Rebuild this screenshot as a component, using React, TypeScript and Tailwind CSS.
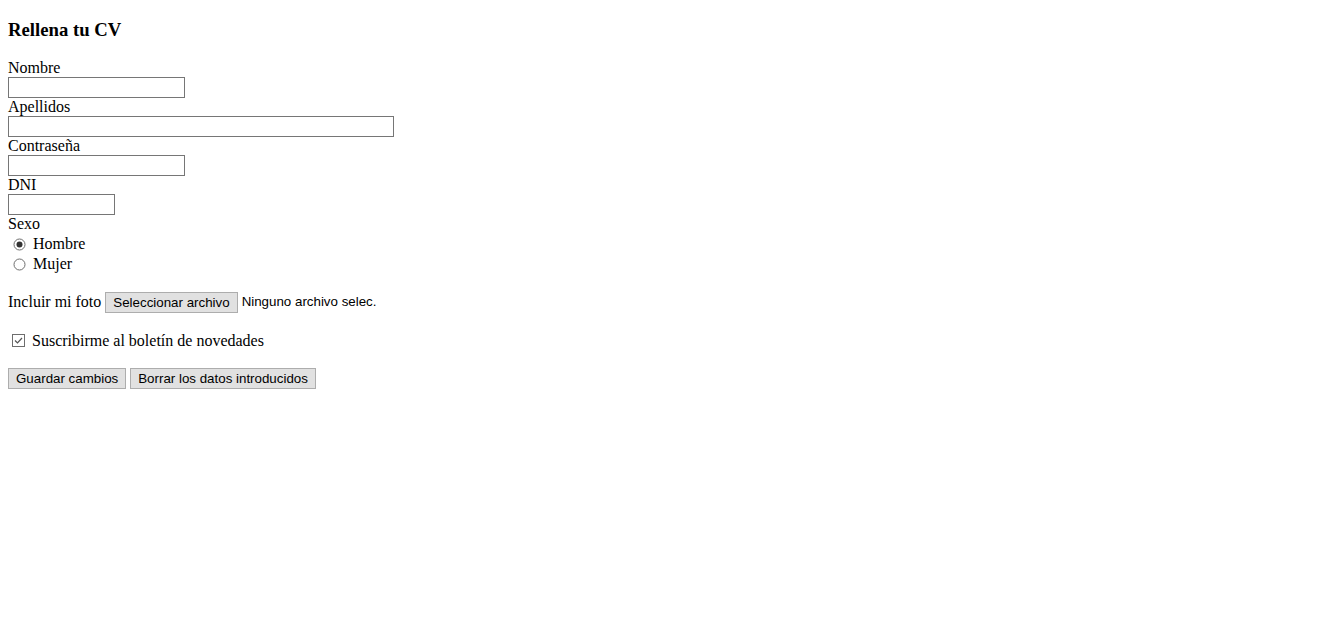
import React from "react";

const serif = "font-['Liberation_Serif',serif]";
const sans = "font-['Liberation_Sans',Arial,sans-serif]";

function TextInput({ w }: { w: string }) {
  return (
    <div className={`h-[21px] ${w} border border-[#767676] bg-white`} />
  );
}

function Btn({ children }: { children: React.ReactNode }) {
  return (
    <button
      type="button"
      className={`${sans} h-[21px] px-[7px] text-[13.33px] leading-[15px] text-black bg-[#e1e1e1] border border-[#adadad] rounded-none`}
    >
      {children}
    </button>
  );
}

function Radio({ checked }: { checked?: boolean }) {
  return (
    <svg width="13" height="13" viewBox="0 0 13 13" className="ml-[5px] mr-[7px]">
      <circle cx="6.5" cy="6.5" r="5.5" fill="white" stroke="#6e6e6e" strokeWidth="1" />
      {checked && <circle cx="6.5" cy="6.5" r="3" fill="#333" />}
    </svg>
  );
}

export default function App() {
  return (
    <div className={`${serif} text-[16px] text-black bg-white min-h-[626px] px-[8px]`}>
      <h3 className="pt-[18.72px] text-[18.72px] font-bold leading-[21.5px]">
        Rellena tu CV
      </h3>
      <div className="pt-[18.72px]">
        <div className="h-[18px] leading-[18px]">Nombre</div>
        <TextInput w="w-[177px]" />
        <div className="h-[18px] leading-[18px]">Apellidos</div>
        <TextInput w="w-[386px]" />
        <div className="h-[18px] leading-[18px]">Contraseña</div>
        <TextInput w="w-[177px]" />
        <div className="h-[18px] leading-[18px]">DNI</div>
        <TextInput w="w-[107px]" />
        <div className="h-[19px] leading-[18px]">Sexo</div>
        <div className="h-[20px] flex items-center pt-[1px]">
          <Radio checked />
          <span>Hombre</span>
        </div>
        <div className="h-[20px] flex items-center pt-[1px]">
          <Radio />
          <span>Mujer</span>
        </div>
        <div className="mt-[18px] h-[21px] flex items-center">
          <span className="mr-[4px]">Incluir mi foto</span>
          <Btn>Seleccionar archivo</Btn>
          <span className={`${sans} text-[13.33px] ml-[4px]`}>Ninguno archivo selec.</span>
        </div>
        <div className="mt-[18px] h-[20px] flex items-center">
          <svg width="13" height="13" viewBox="0 0 13 13" className="ml-[4px] mr-[7px]">
            <rect x="0.5" y="0.5" width="12" height="12" fill="white" stroke="#6e6e6e" />
            <path d="M3 6.5 L5.5 9 L10 4" fill="none" stroke="#555" strokeWidth="1.2" />
          </svg>
          <span>Suscribirme al boletín de novedades</span>
        </div>
        <div className="mt-[17px] flex gap-[4px]">
          <Btn>Guardar cambios</Btn>
          <Btn>Borrar los datos introducidos</Btn>
        </div>
      </div>
    </div>
  );
}
